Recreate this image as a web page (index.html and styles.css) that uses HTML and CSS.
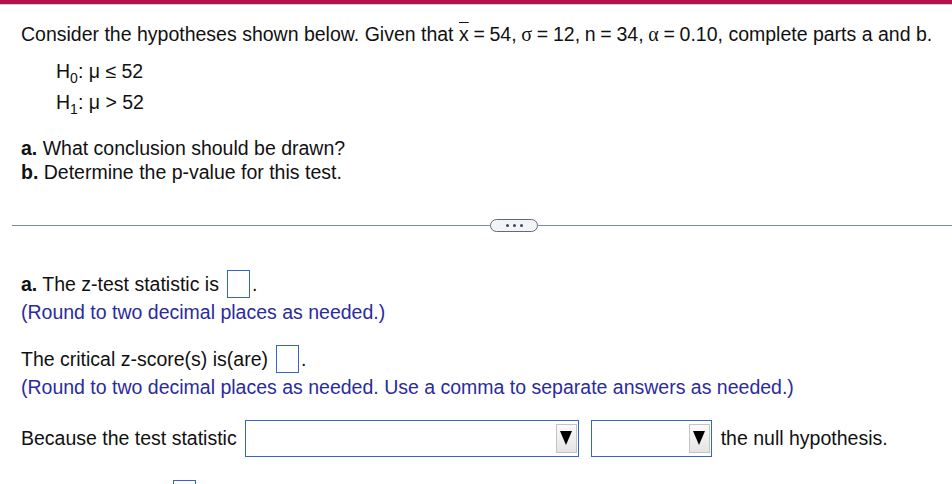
FILE: index.html
```html
<!DOCTYPE html>
<html>
<head>
<meta charset="utf-8">
<link rel="stylesheet" href="styles.css">
</head>
<body>
<div class="topbar"></div>
<div class="content">
  <p class="intro">Consider the hypotheses shown below. Given that <span class="eqs"><span class="xbar">x</span> = 54, <span class="greek">σ</span> = 12, n = 34, <span class="greek">α</span> = 0.10,</span> complete parts a and b.</p>
  <div class="hyps">
    <div class="hyp">H<sub>0</sub>: μ ≤ 52</div>
    <div class="hyp">H<sub>1</sub>: μ &gt; 52</div>
  </div>
  <div class="parts">
    <div><b>a.</b> What conclusion should be drawn?</div>
    <div><b>b.</b> Determine the p-value for this test.</div>
  </div>
</div>
<div class="divider">
  <span class="line short"></span>
  <span class="pill"><i></i><i></i><i></i></span>
  <span class="line"></span>
</div>
<div class="content answers">
  <div class="row"><span><b>a.</b> The z-test statistic is</span><span class="box"></span><span>.</span></div>
  <div class="note">(Round to two decimal places as needed.)</div>
  <div class="row gap"><span>The critical z-score(s) is(are)</span><span class="box"></span><span>.</span></div>
  <div class="note">(Round to two decimal places as needed. Use a comma to separate answers as needed.)</div>
  <div class="row sel-row">
    <span>Because the test statistic</span>
    <span class="select wide"><span class="arrow"></span></span>
    <span class="select narrow"><span class="arrow"></span></span>
    <span>the null hypothesis.</span>
  </div>
  <div class="row last"><span class="box small"></span></div>
</div>
</body>
</html>
```

FILE: styles.css
```css
html, body {
  margin: 0;
  padding: 0;
  background: #fff;
}
body {
  font-family: "Liberation Sans", Arial, sans-serif;
  font-size: 19.5px;
  color: #111;
  width: 952px;
  height: 484px;
  overflow: hidden;
}
.topbar {
  height: 4px;
  background: #b5114f;
  border-bottom: 1px solid #c9d0dc;
}
.content {
  padding-left: 21px;
}
.intro {
  margin: 17px 0 0 0;
  line-height: 24px;
  white-space: nowrap;
}
.eqs {
  word-spacing: -0.7px;
}
.xbar {
  text-decoration: overline;
}
.greek {
  font-family: "Liberation Serif", "Times New Roman", serif;
  font-size: 20px;
}
.hyps {
  padding-left: 35px;
  margin-top: 10px;
}
.hyp {
  line-height: 31px;
}
.hyp sub {
  font-size: 14px;
  vertical-align: -5px;
  line-height: 0;
}
.parts {
  margin-top: 18px;
  line-height: 24px;
}
.divider {
  display: flex;
  align-items: center;
  margin-top: 35px;
  padding-left: 12px;
  height: 13px;
}
.divider .line {
  flex: 1;
  height: 1px;
  background: #7d8a9c;
}
.divider .line.short {
  flex: 0 0 478px;
}
.pill {
  width: 46px;
  height: 11px;
  border: 1px solid #5f6b7d;
  border-radius: 7px;
  background: #f2f4f7;
  display: flex;
  align-items: center;
  justify-content: center;
  gap: 4px;
}
.pill i {
  width: 3px;
  height: 3px;
  border-radius: 50%;
  background: #3e4756;
}
.answers {
  margin-top: 38px;
}
.row {
  display: flex;
  align-items: center;
  height: 28px;
  white-space: nowrap;
}
.gap {
  margin-top: 21px;
}
.note {
  color: #2b2b9c;
  line-height: 24px;
  margin-top: 2px;
  white-space: nowrap;
}
.box {
  display: inline-block;
  width: 21px;
  height: 26px;
  border: 1px solid #3366cc;
  margin-left: 8px;
  margin-right: 2px;
}
.sel-row {
  margin-top: 21px;
  height: 37px;
}
.select {
  display: inline-flex;
  justify-content: flex-end;
  align-items: center;
  height: 37px;
  border: 1px solid #3366cc;
  padding-right: 1px;
  box-sizing: border-box;
}
.select.wide {
  width: 334px;
  margin-left: 8px;
  margin-right: 12px;
}
.select.narrow {
  width: 121px;
  margin-right: 9px;
}
.arrow {
  width: 19px;
  height: 27px;
  border: 1px solid #c4c4c4;
  background: linear-gradient(#fbfbfb, #e4e4e4);
  position: relative;
}
.arrow::after {
  content: "";
  position: absolute;
  left: 3px;
  top: 6px;
  border-left: 6.5px solid transparent;
  border-right: 6.5px solid transparent;
  border-top: 14px solid #000;
}
.last {
  margin-top: 23px;
  padding-left: 152px;
}
.box.small {
  margin: 0;
}
```
